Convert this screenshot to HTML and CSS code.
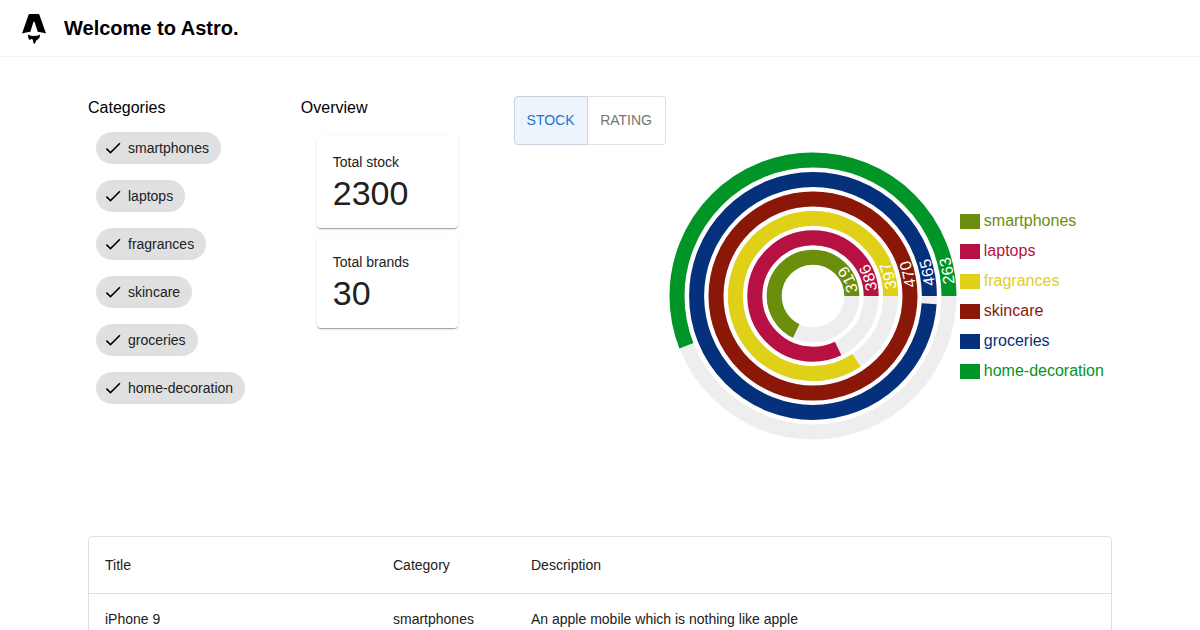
FILE: index.html
```
<!DOCTYPE html>
<html lang="en">
<head>
    <meta charset="UTF-8">
    <meta name="viewport" content="width=device-width, initial-scale=1.0">
    <title>Welcome to Astro.</title>
    <link rel="stylesheet" href="styles.css">
</head>
<body>
    <header class="header">
        <svg class="logo" viewBox="0 -2 24 32" aria-hidden="true">
            <path d="M7.6 0h8.8q.8 0 1.1.9L24 19.6Q20.300 18.200 15.700 17.800L12.700 8.300Q12 6.900 11.300 8.300L8.400 17.800Q3.700 18.200 0 19.600L6.500.9Q6.800 0 7.600 0Z"/>
            <path d="M6.100 20.600Q9 22.500 12 21.800Q15.500 22.300 17.800 20.600Q18.600 24.300 14.700 26Q13.400 27 13.500 28.600L12.300 30Q10.800 28.700 11 26.500Q10.600 24.500 8.700 25.200L7.800 26.200Q5.500 23.800 6.100 20.600Z"/>
        </svg>
        <h1>Welcome to Astro.</h1>
    </header>

    <main class="container">
        <div class="dashboard">
            <section>
                <h2>Categories</h2>
                <div class="chips">
                    <button class="chip" type="button"><svg viewBox="0 0 24 24"><path d="M9 16.200 4.800 12l-1.400 1.400L9 19 21 7l-1.400-1.400z"/></svg>smartphones</button>
                    <button class="chip" type="button"><svg viewBox="0 0 24 24"><path d="M9 16.200 4.800 12l-1.400 1.400L9 19 21 7l-1.400-1.400z"/></svg>laptops</button>
                    <button class="chip" type="button"><svg viewBox="0 0 24 24"><path d="M9 16.200 4.800 12l-1.400 1.400L9 19 21 7l-1.400-1.400z"/></svg>fragrances</button>
                    <button class="chip" type="button"><svg viewBox="0 0 24 24"><path d="M9 16.200 4.800 12l-1.400 1.400L9 19 21 7l-1.400-1.400z"/></svg>skincare</button>
                    <button class="chip" type="button"><svg viewBox="0 0 24 24"><path d="M9 16.200 4.800 12l-1.400 1.400L9 19 21 7l-1.400-1.400z"/></svg>groceries</button>
                    <button class="chip" type="button"><svg viewBox="0 0 24 24"><path d="M9 16.200 4.800 12l-1.400 1.400L9 19 21 7l-1.400-1.400z"/></svg>home-decoration</button>
                </div>
            </section>

            <section>
                <h2>Overview</h2>
                <div class="cards">
                    <div class="card">
                        <p class="card-label">Total stock</p>
                        <p class="card-value">2300</p>
                    </div>
                    <div class="card">
                        <p class="card-label">Total brands</p>
                        <p class="card-value">30</p>
                    </div>
                </div>
            </section>

            <section class="chart-section">
                <div class="toggle">
                    <button class="selected" type="button" aria-pressed="true">STOCK</button>
                    <button type="button" aria-pressed="false">RATING</button>
                </div>
                <div class="chart">
                    <svg class="rings" viewBox="-144 -144 288 288" role="img" aria-label="Stock by category">
                        <defs>
                            <path id="arc1" pathLength="180" d="M38.800 0A38.800 38.800 0 0 0 -38.800 0"/>
                            <path id="arc2" pathLength="180" d="M58.200 0A58.200 58.200 0 0 0 -58.200 0"/>
                            <path id="arc3" pathLength="180" d="M77.600 0A77.600 77.600 0 0 0 -77.600 0"/>
                            <path id="arc4" pathLength="180" d="M97 0A97 97 0 0 0 -97 0"/>
                            <path id="arc5" pathLength="180" d="M116.400 0A116.400 116.400 0 0 0 -116.400 0"/>
                            <path id="arc6" pathLength="180" d="M136 0A136 136 0 0 0 -136 0"/>
                        </defs>
                        <g class="track">
                            <circle r="38.8"/>
                            <circle r="58.2"/>
                            <circle r="77.6"/>
                            <circle r="97"/>
                            <circle r="116.4"/>
                            <circle r="136"/>
                        </g>
                        <!-- flipped so the bars run counterclockwise, full circle = 470 -->
                        <g class="bars" transform="scale(1 -1)">
                            <circle class="smartphones" r="38.8" pathLength="470" stroke-dasharray="319 470"/>
                            <circle class="laptops" r="58.2" pathLength="470" stroke-dasharray="386 470"/>
                            <circle class="fragrances" r="77.6" pathLength="470" stroke-dasharray="397 470"/>
                            <circle class="skincare" r="97"/>
                            <circle class="groceries" r="116.4" pathLength="470" stroke-dasharray="465 470"/>
                            <circle class="home-decoration" r="136" pathLength="470" stroke-dasharray="263 470"/>
                        </g>
                        <g class="values">
                            <text><textPath href="#arc1" startOffset="5">319</textPath></text>
                            <text><textPath href="#arc2" startOffset="5">386</textPath></text>
                            <text><textPath href="#arc3" startOffset="5">397</textPath></text>
                            <text><textPath href="#arc4" startOffset="5">470</textPath></text>
                            <text><textPath href="#arc5" startOffset="5">465</textPath></text>
                            <text><textPath href="#arc6" startOffset="5">263</textPath></text>
                        </g>
                    </svg>
                    <ul class="legend">
                        <li class="smartphones">smartphones</li>
                        <li class="laptops">laptops</li>
                        <li class="fragrances">fragrances</li>
                        <li class="skincare">skincare</li>
                        <li class="groceries">groceries</li>
                        <li class="home-decoration">home-decoration</li>
                    </ul>
                </div>
            </section>
        </div>

        <div class="table-wrap">
            <table>
                <thead>
                    <tr>
                        <th class="col-title">Title</th>
                        <th class="col-category">Category</th>
                        <th>Description</th>
                    </tr>
                </thead>
                <tbody>
                    <tr>
                        <td>iPhone 9</td>
                        <td>smartphones</td>
                        <td>An apple mobile which is nothing like apple</td>
                    </tr>
                </tbody>
            </table>
        </div>
    </main>
</body>
</html>
```
FILE: styles.css
```
* {
    box-sizing: border-box;
}
body {
    font-family: Helvetica, "Liberation Sans", Arial, sans-serif;
    font-size: 16px;
    line-height: 24px;
    color: #000;
    background: #fff;
    margin: 0;
}
h1, h2, p, ul {
    margin: 0;
    padding: 0;
}
.header {
    display: flex;
    align-items: center;
    gap: 18px;
    height: 57px;
    padding: 0 22px;
    border-bottom: 1px solid #f3f4f6;
}
.logo {
    width: 24px;
    height: 32px;
}
h1 {
    font-size: 20px;
    line-height: 28px;
}
h2 {
    font-size: 16px;
    font-weight: normal;
}
.container {
    max-width: 1024px;
    margin: 0 auto;
    padding-top: 39px;
}
.dashboard {
    display: grid;
    grid-template-columns: repeat(5, 1fr);
    column-gap: 40px;
    min-height: 400px;
}
.chips {
    display: flex;
    flex-direction: column;
    align-items: flex-start;
    gap: 16px;
    padding: 12px 8px;
}
.chip {
    display: flex;
    align-items: center;
    gap: 5px;
    height: 32px;
    padding: 0 12px 0 7px;
    font-family: inherit;
    font-size: 14px;
    white-space: nowrap;
    color: #212121;
    background: #e0e0e0;
    border: none;
    border-radius: 16px;
    cursor: pointer;
}
.chip svg {
    width: 20px;
    height: 20px;
}
.cards {
    display: flex;
    flex-direction: column;
    gap: 8px;
    padding: 16px;
}
.card {
    padding: 16px 16px 14px;
    color: #212121;
    border-radius: 4px;
    box-shadow: 0 2px 1px -1px rgba(0, 0, 0, 0.2), 0 1px 1px rgba(0, 0, 0, 0.14), 0 1px 3px rgba(0, 0, 0, 0.12);
}
.card-label {
    font-size: 14px;
    line-height: 20px;
}
.card-value {
    font-size: 34px;
    line-height: 42px;
}
.chart-section {
    grid-column: span 3;
}
.toggle {
    display: flex;
}
.toggle button {
    min-width: 78px;
    padding: 11px 0;
    font-family: inherit;
    font-size: 14px;
    line-height: 25px;
    color: #757575;
    background: #fff;
    border: 1px solid #e0e0e0;
    border-radius: 0 4px 4px 0;
    cursor: pointer;
}
.toggle button + button {
    border-left: none;
}
.toggle .selected {
    min-width: 74px;
    color: #1976d2;
    background: #edf4fb;
    border-color: #c9d3de;
    border-radius: 4px 0 0 4px;
}
.chart {
    display: grid;
    grid-template-columns: 1fr 288px 1fr;
    align-items: center;
    height: 302px;
}
.rings {
    grid-column: 2;
    width: 288px;
    height: 288px;
}
.rings circle {
    fill: none;
    stroke-width: 15px;
}
.track {
    stroke: #eee;
}
.bars circle {
    stroke: currentColor;
}
.values {
    font-size: 16px;
    fill: #fff;
    dominant-baseline: central;
}
.legend {
    padding-left: 3px;
    list-style: none;
}
.legend li {
    display: flex;
    align-items: center;
    gap: 4px;
    line-height: 30px;
    white-space: nowrap;
}
.legend li::before {
    content: "";
    width: 20px;
    height: 15px;
    background: currentColor;
}
.smartphones {
    color: #6b8e0d;
}
.laptops {
    color: #b71143;
}
.fragrances {
    color: #e0d018;
}
.skincare {
    color: #8b1709;
}
.groceries {
    color: #05307c;
}
.home-decoration {
    color: #019527;
}
.table-wrap {
    margin-top: 40px;
    border: 1px solid #e0e0e0;
    border-radius: 4px;
}
table {
    width: 100%;
    table-layout: fixed;
    border-collapse: collapse;
    font-size: 14px;
    line-height: 20px;
    color: #212121;
}
th, td {
    padding: 15px 16px;
    font-weight: normal;
    text-align: left;
}
th {
    padding: 18px 16px;
    border-bottom: 1px solid #e0e0e0;
}
.col-title {
    width: 288px;
}
.col-category {
    width: 138px;
}
```
